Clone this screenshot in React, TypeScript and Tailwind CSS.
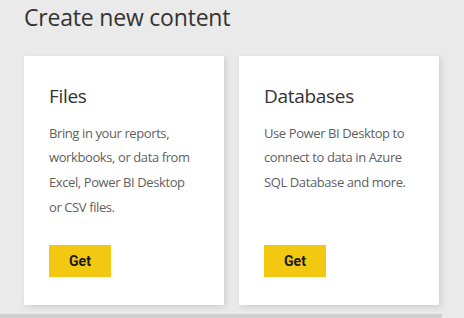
import React from "react";

function Card({ title, lines }: { title: string; lines: string[] }) {
  return (
    <div className="w-[200px] h-[249px] bg-white shadow-[2px_2px_6px_rgba(0,0,0,0.12)] flex flex-col pl-[25px] pt-[27px]">
      <div className="text-[19px] leading-[26px] tracking-[-0.3px] text-[#333333]">{title}</div>
      <div className="mt-[11.5px] text-[13px] leading-[24.75px] tracking-[-0.4px] text-[#5f5f5f]">
        {lines.map((l, i) => (
          <div key={i}>{l}</div>
        ))}
      </div>
      <div className="mt-auto mb-[28px]">
        <div className="w-[62px] h-[32px] bg-[#f2c811] flex items-center justify-center text-[14px] font-bold text-[#1a1a1a] font-['Roboto','Liberation_Sans',sans-serif]">
          Get
        </div>
      </div>
    </div>
  );
}

export default function App() {
  return (
    <div className="w-[464px] h-[318px] bg-[#eaeaea] flex flex-col overflow-hidden font-['Open_Sans','Noto_Sans',sans-serif]">
      <div className="pl-6 pt-[2px] text-[23px] leading-[30px] tracking-[-0.2px] text-[#333333]">Create new content</div>
      <div className="flex gap-[15px] pl-6 mt-[24px]">
        <Card
          title="Files"
          lines={["Bring in your reports,", "workbooks, or data from", "Excel, Power BI Desktop", "or CSV files."]}
        />
        <Card
          title="Databases"
          lines={["Use Power BI Desktop to", "connect to data in Azure", "SQL Database and more."]}
        />
      </div>
      <div className="mt-auto w-[442px] h-[4px] bg-[#cfcfcf]" />
    </div>
  );
}
